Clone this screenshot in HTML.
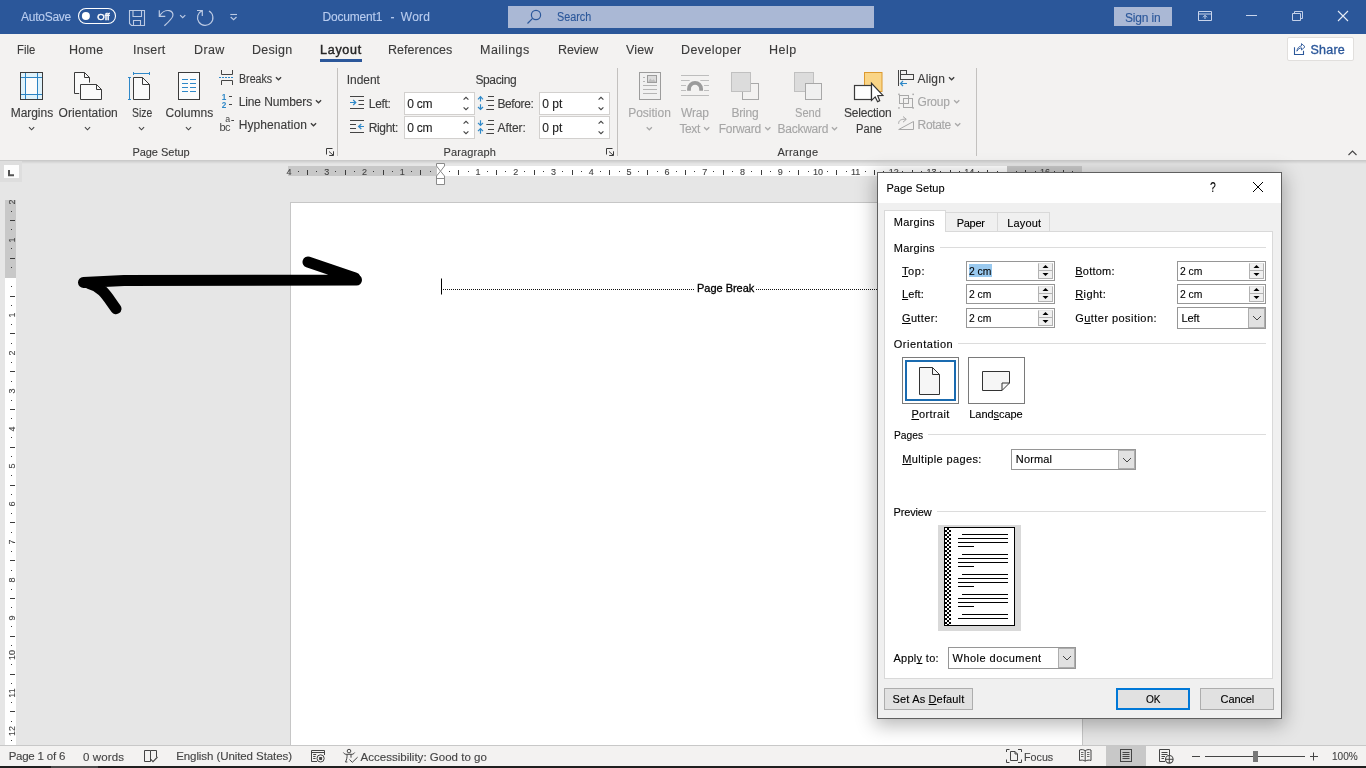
<!DOCTYPE html>
<html><head><meta charset="utf-8"><title>Document1 - Word</title>
<style>
*{box-sizing:border-box;margin:0;padding:0}
html,body{width:1366px;height:768px;overflow:hidden;background:#e6e6e6;font-family:"Liberation Sans",sans-serif;font-size:12px;color:#444}
.a{position:absolute;white-space:nowrap;-webkit-text-stroke:0.12px}
svg{position:absolute;left:0;top:0;overflow:visible}
u{text-decoration:underline;text-underline-offset:1px;text-decoration-thickness:1px;text-decoration-skip-ink:none}
</style></head><body>
<div id="root" style="position:absolute;left:0;top:0;width:1366px;height:768px;will-change:transform">
<div class="a" style="left:0px;top:0px;width:1366px;height:34px;background:#2b579a;"></div>
<div class="a" style="left:0px;top:34px;width:1366px;height:126px;background:#f3f2f1;"></div>
<div class="a" style="left:0px;top:160px;width:1366px;height:4px;background:linear-gradient(#c6c6c6,#e6e6e6);"></div>
<div class="a" style="left:508px;top:6px;width:366px;height:22px;background:#aab8d5;"></div>
<div class="a" style="left:1114px;top:7px;width:58px;height:19px;background:#aab8d5;"></div>
<div class="a" style="left:1287px;top:37px;width:67px;height:24px;background:#fff;border:1px solid #e1dfdd;border-radius:2px;"></div>
<div class="a" style="left:320px;top:59px;width:42px;height:3px;background:#2b579a;"></div>
<div class="a" style="left:404px;top:92px;width:71px;height:23px;background:#fff;border:1px solid #d2d0ce;"></div>
<div class="a" style="left:404px;top:116px;width:71px;height:23px;background:#fff;border:1px solid #d2d0ce;"></div>
<div class="a" style="left:539px;top:92px;width:71px;height:23px;background:#fff;border:1px solid #d2d0ce;"></div>
<div class="a" style="left:539px;top:116px;width:71px;height:23px;background:#fff;border:1px solid #d2d0ce;"></div>
<div class="a" style="left:288px;top:166px;width:149px;height:10px;background:#c8c8c8;"></div>
<div class="a" style="left:437px;top:166px;width:570px;height:10px;background:#fff;"></div>
<div class="a" style="left:1007px;top:166px;width:75px;height:10px;background:#c8c8c8;"></div>
<div class="a" style="left:5px;top:200px;width:11px;height:78px;background:#c8c8c8;"></div>
<div class="a" style="left:5px;top:278px;width:11px;height:467px;background:#fff;"></div>
<div class="a" style="left:0px;top:161px;width:22px;height:21px;background:#dedede;"></div>
<div class="a" style="left:4px;top:165px;width:15px;height:13px;background:#fdfdfd;"></div>
<div class="a" style="left:290px;top:202px;width:793px;height:544px;background:#fff;border:1px solid #c6c6c6;"></div>
<div class="a" style="left:0px;top:745px;width:1366px;height:21px;background:#f3f2f1;border-top:1px solid #c8c8c8;"></div>
<div class="a" style="left:1106px;top:746px;width:40px;height:20px;background:#c8c8c8;"></div>
<div class="a" style="left:0px;top:766px;width:1366px;height:2px;background:#1f1f1f;"></div>
<div class="a" style="left:51px;top:766px;width:47px;height:2px;background:#4c4c4c;"></div>
<div class="a" style="left:21.0px;top:10.0px;font-size:12px;line-height:14px;color:#b9cdf0;letter-spacing:-0.26px;">AutoSave</div>
<div class="a" style="left:97.3px;top:11.0px;font-size:9.5px;line-height:11px;color:#fff;letter-spacing:-0.05px;-webkit-text-stroke:0.45px #fff;">Off</div>
<div class="a" style="left:322.5px;top:10.0px;font-size:12px;line-height:14px;color:#b9cdf0;letter-spacing:-0.18px;">Document1</div>
<div class="a" style="left:390.6px;top:10.0px;font-size:12px;line-height:14px;color:#b9cdf0;">-</div>
<div class="a" style="left:400.8px;top:10.0px;font-size:12px;line-height:14px;color:#b9cdf0;letter-spacing:0.26px;">Word</div>
<div class="a" style="left:557.0px;top:10.0px;font-size:12px;line-height:14px;color:#2b579a;transform:scaleX(0.900);transform-origin:0 0;">Search</div>
<div class="a" style="left:1125.0px;top:11.0px;font-size:12px;line-height:14px;color:#2b579a;letter-spacing:-0.19px;word-spacing:0.19px;">Sign in</div>
<div class="a" style="left:17.0px;top:43.0px;font-size:12.5px;line-height:14px;color:#3b3b3b;transform:scaleX(0.905);transform-origin:0 0;">File</div>
<div class="a" style="left:69.0px;top:43.0px;font-size:12.5px;line-height:14px;color:#3b3b3b;letter-spacing:0.30px;">Home</div>
<div class="a" style="left:133.0px;top:43.0px;font-size:12.5px;line-height:14px;color:#3b3b3b;letter-spacing:0.20px;">Insert</div>
<div class="a" style="left:194.0px;top:43.0px;font-size:12.5px;line-height:14px;color:#3b3b3b;letter-spacing:0.36px;">Draw</div>
<div class="a" style="left:252.0px;top:43.0px;font-size:12.5px;line-height:14px;color:#3b3b3b;letter-spacing:0.27px;">Design</div>
<div class="a" style="left:388.0px;top:43.0px;font-size:12.5px;line-height:14px;color:#3b3b3b;letter-spacing:0.04px;">References</div>
<div class="a" style="left:480.0px;top:43.0px;font-size:12.5px;line-height:14px;color:#3b3b3b;letter-spacing:0.49px;">Mailings</div>
<div class="a" style="left:558.0px;top:43.0px;font-size:12.5px;line-height:14px;color:#3b3b3b;letter-spacing:-0.15px;">Review</div>
<div class="a" style="left:626.0px;top:43.0px;font-size:12.5px;line-height:14px;color:#3b3b3b;letter-spacing:0.13px;">View</div>
<div class="a" style="left:681.0px;top:43.0px;font-size:12.5px;line-height:14px;color:#3b3b3b;letter-spacing:0.41px;">Developer</div>
<div class="a" style="left:769.0px;top:43.0px;font-size:12.5px;line-height:14px;color:#3b3b3b;letter-spacing:0.51px;">Help</div>
<div class="a" style="left:320.0px;top:43.0px;font-size:12.5px;line-height:14px;color:#262626;letter-spacing:0.74px;-webkit-text-stroke:0.45px #262626;">Layout</div>
<div class="a" style="left:1310.5px;top:43.0px;font-size:12.5px;line-height:14px;color:#2b579a;letter-spacing:0.22px;-webkit-text-stroke:0.35px #2b579a;">Share</div>
<div class="a" style="left:10.7px;top:105.7px;font-size:12px;line-height:14px;color:#3b3b3b;letter-spacing:-0.04px;">Margins</div>
<div class="a" style="left:58.6px;top:105.7px;font-size:12px;line-height:14px;color:#3b3b3b;letter-spacing:0.05px;">Orientation</div>
<div class="a" style="left:132.0px;top:105.7px;font-size:12px;line-height:14px;color:#3b3b3b;transform:scaleX(0.866);transform-origin:0 0;">Size</div>
<div class="a" style="left:165.6px;top:105.7px;font-size:12px;line-height:14px;color:#3b3b3b;letter-spacing:0.05px;">Columns</div>
<div class="a" style="left:132.4px;top:146.0px;font-size:11px;line-height:12px;color:#3b3b3b;letter-spacing:-0.03px;word-spacing:0.03px;">Page Setup</div>
<div class="a" style="left:238.7px;top:71.7px;font-size:12px;line-height:14px;color:#3b3b3b;transform:scaleX(0.889);transform-origin:0 0;">Breaks</div>
<div class="a" style="left:238.7px;top:94.7px;font-size:12px;line-height:14px;color:#3b3b3b;letter-spacing:-0.12px;word-spacing:0.12px;">Line Numbers</div>
<div class="a" style="left:238.7px;top:117.7px;font-size:12px;line-height:14px;color:#3b3b3b;letter-spacing:0.09px;">Hyphenation</div>
<div class="a" style="left:346.7px;top:73.0px;font-size:12px;line-height:14px;color:#3b3b3b;letter-spacing:-0.02px;">Indent</div>
<div class="a" style="left:368.8px;top:96.7px;font-size:12px;line-height:14px;color:#3b3b3b;letter-spacing:-0.33px;">Left:</div>
<div class="a" style="left:368.8px;top:120.5px;font-size:12px;line-height:14px;color:#3b3b3b;letter-spacing:-0.38px;">Right:</div>
<div class="a" style="left:475.4px;top:73.0px;font-size:12px;line-height:14px;color:#3b3b3b;letter-spacing:-0.35px;">Spacing</div>
<div class="a" style="left:497.5px;top:96.7px;font-size:12px;line-height:14px;color:#3b3b3b;letter-spacing:-0.41px;">Before:</div>
<div class="a" style="left:497.5px;top:120.5px;font-size:12px;line-height:14px;color:#3b3b3b;letter-spacing:-0.09px;">After:</div>
<div class="a" style="left:407.2px;top:96.7px;font-size:12px;line-height:14px;color:#1f1f1f;letter-spacing:-0.38px;word-spacing:0.38px;">0 cm</div>
<div class="a" style="left:407.2px;top:120.5px;font-size:12px;line-height:14px;color:#1f1f1f;letter-spacing:-0.38px;word-spacing:0.38px;">0 cm</div>
<div class="a" style="left:542.2px;top:96.7px;font-size:12px;line-height:14px;color:#1f1f1f;letter-spacing:0.07px;">0 pt</div>
<div class="a" style="left:542.2px;top:120.5px;font-size:12px;line-height:14px;color:#1f1f1f;letter-spacing:0.07px;">0 pt</div>
<div class="a" style="left:443.5px;top:146.0px;font-size:11px;line-height:12px;color:#3b3b3b;letter-spacing:0.11px;">Paragraph</div>
<div class="a" style="left:628.2px;top:105.7px;font-size:12px;line-height:14px;color:#a6a6a6;letter-spacing:-0.01px;">Position</div>
<div class="a" style="left:681.0px;top:105.7px;font-size:12px;line-height:14px;color:#a6a6a6;letter-spacing:-0.14px;">Wrap</div>
<div class="a" style="left:679.5px;top:121.7px;font-size:12px;line-height:14px;color:#a6a6a6;letter-spacing:-0.42px;">Text</div>
<div class="a" style="left:731.4px;top:105.7px;font-size:12px;line-height:14px;color:#a6a6a6;letter-spacing:-0.19px;">Bring</div>
<div class="a" style="left:718.7px;top:121.7px;font-size:12px;line-height:14px;color:#a6a6a6;letter-spacing:-0.25px;">Forward</div>
<div class="a" style="left:795.3px;top:105.7px;font-size:12px;line-height:14px;color:#a6a6a6;transform:scaleX(0.925);transform-origin:0 0;">Send</div>
<div class="a" style="left:777.5px;top:121.7px;font-size:12px;line-height:14px;color:#a6a6a6;letter-spacing:-0.25px;">Backward</div>
<div class="a" style="left:844.0px;top:105.7px;font-size:12px;line-height:14px;color:#3b3b3b;letter-spacing:-0.22px;">Selection</div>
<div class="a" style="left:855.5px;top:121.7px;font-size:12px;line-height:14px;color:#3b3b3b;transform:scaleX(0.929);transform-origin:0 0;">Pane</div>
<div class="a" style="left:777.5px;top:146.0px;font-size:11px;line-height:12px;color:#3b3b3b;letter-spacing:0.23px;">Arrange</div>
<div class="a" style="left:917.6px;top:71.7px;font-size:12px;line-height:14px;color:#3b3b3b;letter-spacing:0.14px;">Align</div>
<div class="a" style="left:917.6px;top:94.7px;font-size:12px;line-height:14px;color:#a6a6a6;letter-spacing:-0.28px;">Group</div>
<div class="a" style="left:917.6px;top:117.7px;font-size:12px;line-height:14px;color:#a6a6a6;letter-spacing:-0.34px;">Rotate</div>
<div class="a" style="left:697.0px;top:282.0px;font-size:11px;line-height:12px;color:#000;letter-spacing:-0.03px;word-spacing:0.03px;-webkit-text-stroke:0.3px #000;">Page Break</div>
<div class="a" style="left:8.7px;top:750.0px;font-size:11.5px;line-height:12px;color:#444;letter-spacing:-0.30px;word-spacing:0.30px;">Page 1 of 6</div>
<div class="a" style="left:83.0px;top:751.0px;font-size:11.5px;line-height:12px;color:#444;letter-spacing:0.11px;">0 words</div>
<div class="a" style="left:176.2px;top:750.0px;font-size:11.5px;line-height:12px;color:#444;letter-spacing:-0.09px;word-spacing:0.09px;">English (United States)</div>
<div class="a" style="left:360.5px;top:750.6px;font-size:11.5px;line-height:12px;color:#444;letter-spacing:0.02px;">Accessibility: Good to go</div>
<div class="a" style="left:1024.4px;top:751.0px;font-size:11.5px;line-height:12px;color:#444;transform:scaleX(0.933);transform-origin:0 0;">Focus</div>
<div class="a" style="left:1332.0px;top:750.0px;font-size:11.5px;line-height:12px;color:#444;transform:scaleX(0.877);transform-origin:0 0;">100%</div>
<div class="a" style="left:399.8px;top:166.6px;font-size:9px;line-height:10px;color:#444;">1</div>
<div class="a" style="left:362.0px;top:166.6px;font-size:9px;line-height:10px;color:#444;">2</div>
<div class="a" style="left:324.2px;top:166.6px;font-size:9px;line-height:10px;color:#444;">3</div>
<div class="a" style="left:286.4px;top:166.6px;font-size:9px;line-height:10px;color:#444;">4</div>
<div class="a" style="left:475.4px;top:166.6px;font-size:9px;line-height:10px;color:#444;">1</div>
<div class="a" style="left:513.2px;top:166.6px;font-size:9px;line-height:10px;color:#444;">2</div>
<div class="a" style="left:551.0px;top:166.6px;font-size:9px;line-height:10px;color:#444;">3</div>
<div class="a" style="left:588.8px;top:166.6px;font-size:9px;line-height:10px;color:#444;">4</div>
<div class="a" style="left:626.6px;top:166.6px;font-size:9px;line-height:10px;color:#444;">5</div>
<div class="a" style="left:664.4px;top:166.6px;font-size:9px;line-height:10px;color:#444;">6</div>
<div class="a" style="left:702.2px;top:166.6px;font-size:9px;line-height:10px;color:#444;">7</div>
<div class="a" style="left:740.0px;top:166.6px;font-size:9px;line-height:10px;color:#444;">8</div>
<div class="a" style="left:777.8px;top:166.6px;font-size:9px;line-height:10px;color:#444;">9</div>
<div class="a" style="left:813.1px;top:166.6px;font-size:9px;line-height:10px;color:#444;">10</div>
<div class="a" style="left:850.9px;top:166.6px;font-size:9px;line-height:10px;color:#444;">11</div>
<div class="a" style="left:888.7px;top:166.6px;font-size:9px;line-height:10px;color:#444;">12</div>
<div class="a" style="left:926.5px;top:166.6px;font-size:9px;line-height:10px;color:#444;">13</div>
<div class="a" style="left:964.3px;top:166.6px;font-size:9px;line-height:10px;color:#444;">14</div>
<div class="a" style="left:1039.9px;top:166.6px;font-size:9px;line-height:10px;color:#444;">16</div>
<div class="a" style="left:6.3px;top:233.6px;width:11px;height:12px;font-size:9px;line-height:12px;color:#444;text-align:center;transform:rotate(-90deg)">1</div>
<div class="a" style="left:6.3px;top:195.8px;width:11px;height:12px;font-size:9px;line-height:12px;color:#444;text-align:center;transform:rotate(-90deg)">2</div>
<div class="a" style="left:6.3px;top:309.2px;width:11px;height:12px;font-size:9px;line-height:12px;color:#444;text-align:center;transform:rotate(-90deg)">1</div>
<div class="a" style="left:6.3px;top:347.0px;width:11px;height:12px;font-size:9px;line-height:12px;color:#444;text-align:center;transform:rotate(-90deg)">2</div>
<div class="a" style="left:6.3px;top:384.8px;width:11px;height:12px;font-size:9px;line-height:12px;color:#444;text-align:center;transform:rotate(-90deg)">3</div>
<div class="a" style="left:6.3px;top:422.6px;width:11px;height:12px;font-size:9px;line-height:12px;color:#444;text-align:center;transform:rotate(-90deg)">4</div>
<div class="a" style="left:6.3px;top:460.4px;width:11px;height:12px;font-size:9px;line-height:12px;color:#444;text-align:center;transform:rotate(-90deg)">5</div>
<div class="a" style="left:6.3px;top:498.2px;width:11px;height:12px;font-size:9px;line-height:12px;color:#444;text-align:center;transform:rotate(-90deg)">6</div>
<div class="a" style="left:6.3px;top:536.0px;width:11px;height:12px;font-size:9px;line-height:12px;color:#444;text-align:center;transform:rotate(-90deg)">7</div>
<div class="a" style="left:6.3px;top:573.8px;width:11px;height:12px;font-size:9px;line-height:12px;color:#444;text-align:center;transform:rotate(-90deg)">8</div>
<div class="a" style="left:6.3px;top:611.6px;width:11px;height:12px;font-size:9px;line-height:12px;color:#444;text-align:center;transform:rotate(-90deg)">9</div>
<div class="a" style="left:6.3px;top:649.4px;width:11px;height:12px;font-size:9px;line-height:12px;color:#444;text-align:center;transform:rotate(-90deg)">10</div>
<div class="a" style="left:6.3px;top:687.2px;width:11px;height:12px;font-size:9px;line-height:12px;color:#444;text-align:center;transform:rotate(-90deg)">11</div>
<div class="a" style="left:6.3px;top:725.0px;width:11px;height:12px;font-size:9px;line-height:12px;color:#444;text-align:center;transform:rotate(-90deg)">12</div>
<svg width="1366" height="768" viewBox="0 0 1366 768"><rect x="78.5" y="8.5" width="37" height="15" rx="7.5" stroke="#fff" fill="none" stroke-width="1.1"/>
<circle cx="85.9" cy="16.1" r="4" fill="#fff"/>
<path d="M129.5,10.5 H144.5 V25.5 H131.5 L129.5,23.5 Z M133,10.5 V16.5 H141.5 V10.5 M133.5,25.5 V20.5 H140.5 V25.5" stroke="#bccae3" fill="none" stroke-width="1.1" />
<path d="M159.3,10.2 V16.4 H165.3 M159.5,16.2 C161.5,12.5 165.5,10 169.3,10.6 C172,11.3 173.3,13.5 172.8,16 C172.3,18.5 169,21.5 164.4,25.8" stroke="#bccae3" fill="none" stroke-width="1.2" />
<path d="M180.1,15.099999999999998 L182.7,17.7 L185.29999999999998,15.099999999999998" stroke="#bccae3" fill="none" stroke-width="1.2" />
<path d="M197,10.5 H202.3 V15.9 M209,11 A7.7,7.7 0 1 1 202.2,10.6" stroke="#bccae3" fill="none" stroke-width="1.2" />
<path d="M230.3,14.5 H237" stroke="#bccae3" fill="none" stroke-width="1.1" />
<path d="M230.7,17.0 L233.6,19.6 L236.5,17.0" stroke="#bccae3" fill="none" stroke-width="1.2" />
<circle cx="536" cy="15" r="4.6" stroke="#2b579a" fill="none" stroke-width="1.2"/>
<path d="M532.6,18.4 L527.5,23.5" stroke="#2b579a" fill="none" stroke-width="1.2" />
<path d="M1198.5,11.5 H1211.5 V20.5 H1198.5 Z M1198.5,14 H1211.5" stroke="#c9d5ec" fill="none" stroke-width="1" />
<path d="M1205,19 V15.5 M1203,17.3 L1205,15.3 L1207,17.3" stroke="#c9d5ec" fill="none" stroke-width="1" />
<path d="M1246,15.5 H1257" stroke="#c9d5ec" fill="none" stroke-width="1" />
<path d="M1292.5,13.5 H1300.5 V20.5 H1292.5 Z M1294.5,13.5 V11.5 H1302.5 V18.5 H1300.5" stroke="#c3d0e9" fill="none" stroke-width="1" />
<path d="M1338,11 L1348,21 M1348,11 L1338,21" stroke="#e6ecf6" fill="none" stroke-width="1.1" />
<path d="M1294.5,47.2 V54.5 H1303.5 V50.8" stroke="#2b579a" fill="none" stroke-width="1.1" />
<path d="M1296.9,51.2 C1297.2,48.2 1299,46.3 1301.5,45.9 V43.6 L1305,46.8 L1301.5,50 V47.8 C1299.6,48 1298,49.2 1296.9,51.2 Z" stroke="#2b579a" fill="none" stroke-width="0.9" stroke-linejoin="round"/>
<rect x="20.5" y="72.5" width="22" height="27" stroke="#3b3b3b" fill="#dff2fb" stroke-width="1" />
<rect x="25.5" y="77.5" width="12" height="17" stroke="none" fill="#fbfbfb" stroke-width="0" />
<path d="M25.5,73 V99 M37.5,73 V99 M21,77.5 H42 M21,94.5 H42" stroke="#2c84c4" fill="none" stroke-width="1" />
<path d="M74.5,72.5 H84.5 L89.5,77.5 V84 H80.5 V93.5 H74.5 Z" stroke="none" fill="#fafafa" stroke-width="0" />
<path d="M89.5,82.6 V77.5 L84.5,72.5 H74.5 V93.5 H79.2" stroke="#3b3b3b" fill="none" stroke-width="1" />
<path d="M84.5,72.5 V77.5 H89.5" stroke="#3b3b3b" fill="none" stroke-width="1" />
<path d="M80.5,84.5 H96.5 L101.5,89.5 V99.5 H80.5 Z" stroke="#3b3b3b" fill="#fafafa" stroke-width="1" />
<path d="M96.5,84.5 V89.5 H101.5" stroke="#3b3b3b" fill="none" stroke-width="1" />
<path d="M133.5,77.5 H142.5 L149.5,84.5 V99.5 H133.5 Z" stroke="#3b3b3b" fill="#fafafa" stroke-width="1" />
<path d="M142.5,77.5 V84.5 H149.5" stroke="#3b3b3b" fill="none" stroke-width="1" />
<path d="M133,73.5 H150 M133.5,72 V75 M149.5,72 V75" stroke="#2e88c8" fill="none" stroke-width="1" />
<path d="M129.5,77 V100 M128,77.5 H131 M128,99.5 H131" stroke="#2e88c8" fill="none" stroke-width="1" />
<rect x="178.5" y="72.5" width="21" height="27" stroke="#3b3b3b" fill="#fbfbfb" stroke-width="1" />
<path d="M182,79.5 H188 M190,79.5 H196" stroke="#2e88c8" fill="none" stroke-width="1" />
<path d="M182,83.5 H188 M190,83.5 H196" stroke="#2e88c8" fill="none" stroke-width="1" />
<path d="M182,87.5 H188 M190,87.5 H196" stroke="#2e88c8" fill="none" stroke-width="1" />
<path d="M182,91.5 H188 M190,91.5 H196" stroke="#2e88c8" fill="none" stroke-width="1" />
<path d="M29.0,127.2 L31.6,129.8 L34.2,127.2" stroke="#444" fill="none" stroke-width="1.1" />
<path d="M84.9,127.2 L87.5,129.8 L90.1,127.2" stroke="#444" fill="none" stroke-width="1.1" />
<path d="M138.9,127.2 L141.5,129.8 L144.1,127.2" stroke="#444" fill="none" stroke-width="1.1" />
<path d="M185.9,127.2 L188.5,129.8 L191.1,127.2" stroke="#444" fill="none" stroke-width="1.1" />
<path d="M221.5,70 V74.5 H232.5 V70 M221.5,85 V80.5 H232.5 V85" stroke="#444" fill="none" stroke-width="1" />
<path d="M219,77.5 H234" stroke="#2e88c8" fill="none" stroke-width="1" stroke-dasharray="2 1"/>
<path d="M275.9,77.2 L278.5,79.8 L281.1,77.2" stroke="#3b3b3b" fill="none" stroke-width="1.25" />
<text x="221.8" y="99.6" font-size="8.2" font-weight="bold" fill="#2e88c8" font-family="Liberation Sans, sans-serif">1</text>
<text x="221.8" y="108.1" font-size="8.2" font-weight="bold" fill="#2e88c8" font-family="Liberation Sans, sans-serif">2</text>
<path d="M229,96.5 H232 M229,104.5 H232" stroke="#444" fill="none" stroke-width="1.1" />
<path d="M315.9,100.2 L318.5,102.8 L321.1,100.2" stroke="#3b3b3b" fill="none" stroke-width="1.25" />
<text x="225.3" y="122" font-size="8.8" fill="#444" font-family="Liberation Sans, sans-serif">a</text>
<text x="219.5" y="130.7" font-size="11" letter-spacing="-0.5" fill="#444" font-family="Liberation Sans, sans-serif">bc</text>
<path d="M231.3,120.5 H234" stroke="#444" fill="none" stroke-width="1" />
<path d="M310.9,123.2 L313.5,125.8 L316.1,123.2" stroke="#3b3b3b" fill="none" stroke-width="1.25" />
<path d="M326.5,154.5 V148.5 H332.5" stroke="#3b3b3b" fill="none" stroke-width="1" />
<path d="M329,151.5 L333.2,155.2 M333.5,151.3 V155.5 H329.2" stroke="#3b3b3b" fill="none" stroke-width="1" />
<path d="M606.5,154.5 V148.5 H612.5" stroke="#3b3b3b" fill="none" stroke-width="1" />
<path d="M609,151.5 L613.2,155.2 M613.5,151.3 V155.5 H609.2" stroke="#3b3b3b" fill="none" stroke-width="1" />
<path d="M337.5,68 V156" stroke="#c3c1bf" fill="none" stroke-width="1" />
<path d="M617.5,68 V156" stroke="#c3c1bf" fill="none" stroke-width="1" />
<path d="M976.5,68 V156" stroke="#c3c1bf" fill="none" stroke-width="1" />
<path d="M350,96.5 H364 M358.5,100.5 H364 M358.5,104.5 H364 M350,108.5 H364" stroke="#444" fill="none" stroke-width="1" />
<path d="M350,102.5 H355.7 M353.2,100 L355.8,102.5 L353.2,105" stroke="#2e88c8" fill="none" stroke-width="1.2" />
<path d="M350,120.5 H364 M350,124.5 H356 M350,128.5 H356 M350,132.5 H364" stroke="#444" fill="none" stroke-width="1" />
<path d="M358.7,126.5 H364 M361.3,124 L358.6,126.5 L361.3,129" stroke="#2e88c8" fill="none" stroke-width="1.2" />
<path d="M488,96.5 H494 M486.3,100.5 H494 M488,105.5 H494 M486.3,109.5 H494" stroke="#444" fill="none" stroke-width="1" />
<path d="M480.5,96.8 V101.6 M478,99.3 L480.5,96.7 L483,99.3 M480.5,104.3 V109.4 M478,107 L480.5,109.5 L483,107" stroke="#2e88c8" fill="none" stroke-width="1.2" />
<path d="M488,120.5 H494 M486.3,124.5 H494 M488,129.5 H494 M486.3,133.5 H494" stroke="#444" fill="none" stroke-width="1" />
<path d="M480.5,120.3 V125.3 M478,122.9 L480.5,125.4 L483,122.9 M480.5,128.7 V133.8 M478,131.2 L480.5,128.6 L483,131.2" stroke="#2e88c8" fill="none" stroke-width="1.2" />
<path d="M463.6,99.7 L466,97.3 L468.4,99.7" stroke="#444" fill="none" stroke-width="1.1" />
<path d="M463.6,107.3 L466,109.7 L468.4,107.3" stroke="#444" fill="none" stroke-width="1.1" />
<path d="M463.6,123.7 L466,121.3 L468.4,123.7" stroke="#444" fill="none" stroke-width="1.1" />
<path d="M463.6,131.3 L466,133.7 L468.4,131.3" stroke="#444" fill="none" stroke-width="1.1" />
<path d="M598.6,99.7 L601,97.3 L603.4,99.7" stroke="#444" fill="none" stroke-width="1.1" />
<path d="M598.6,107.3 L601,109.7 L603.4,107.3" stroke="#444" fill="none" stroke-width="1.1" />
<path d="M598.6,123.7 L601,121.3 L603.4,123.7" stroke="#444" fill="none" stroke-width="1.1" />
<path d="M598.6,131.3 L601,133.7 L603.4,131.3" stroke="#444" fill="none" stroke-width="1.1" />
<rect x="639.5" y="72.5" width="21" height="27" stroke="#9c9c9c" fill="#f0f0f0" stroke-width="1" />
<rect x="647.5" y="75.5" width="9" height="7" stroke="#9c9c9c" fill="#dcdcdc" stroke-width="1" />
<path d="M648,82 L650.3,78.5 L652,80.5 L653.6,79.3 L656,82 Z" stroke="none" fill="#bdbdbd" stroke-width="0" />
<path d="M643,77.5 H645 M643,81.5 H645 M643,85.5 H657 M643,89.5 H657 M643,93.5 H657" stroke="#b4b4b4" fill="none" stroke-width="1" />
<path d="M646.6999999999999,127.2 L649.3,129.8 L651.9,127.2" stroke="#a8a8a8" fill="none" stroke-width="1.25" />
<path d="M681,75.5 H709 M681,80.5 H689.7 M700.3,80.5 H709 M681,85.5 H686 M704,85.5 H709 M681,90.5 H686 M704,90.5 H709 M681,95.5 H709" stroke="#bdbdbd" fill="none" stroke-width="1" />
<path d="M689,90.8 V88.9 A6.05,6.05 0 0 1 701.1,88.9 V90.8" stroke="#9b9b9b" fill="none" stroke-width="3.8" />
<path d="M704.1,127.2 L706.7,129.8 L709.3000000000001,127.2" stroke="#a8a8a8" fill="none" stroke-width="1.25" />
<rect x="742.5" y="83.5" width="16" height="16" stroke="#a8a8a8" fill="#f3f2f1" stroke-width="1" />
<rect x="731.5" y="72.5" width="19" height="19" stroke="#c0c0c0" fill="#dcdcdc" stroke-width="1" />
<path d="M765.1999999999999,127.2 L767.8,129.8 L770.4,127.2" stroke="#a8a8a8" fill="none" stroke-width="1.25" />
<rect x="794.5" y="72.5" width="19" height="19" stroke="#c0c0c0" fill="#dcdcdc" stroke-width="1" />
<rect x="805.5" y="83.5" width="16" height="16" stroke="#a8a8a8" fill="#f0f0f0" stroke-width="1" />
<path d="M831.9,127.2 L834.5,129.8 L837.1,127.2" stroke="#a8a8a8" fill="none" stroke-width="1.25" />
<rect x="864.5" y="72.5" width="17.5" height="19" stroke="#dc9a30" fill="#fad586" stroke-width="1" />
<rect x="854.5" y="85.5" width="17" height="14" stroke="#3b3b3b" fill="#fdfdfd" stroke-width="1.2" />
<path d="M871.5,83.3 L871.5,100.4 L875.2,96.9 L877.6,101.7 L879.7,100.6 L877.7,95.7 L882.9,95.4 Z" stroke="#333" fill="#fff" stroke-width="1.2" stroke-linejoin="miter"/>
<path d="M898.5,70 V86" stroke="#444" fill="none" stroke-width="1" />
<rect x="900.5" y="70.5" width="6" height="4" stroke="#444" fill="none" stroke-width="1" />
<rect x="900.5" y="74.5" width="13" height="5" stroke="#444" fill="none" stroke-width="1" />
<path d="M900.6,83.5 H907 M903,81 L900.5,83.5 L903,86" stroke="#2e88c8" fill="none" stroke-width="1.2" />
<path d="M949.0,77.2 L951.6,79.8 L954.2,77.2" stroke="#3b3b3b" fill="none" stroke-width="1.25" />
<rect x="899.5" y="95.5" width="9" height="8" stroke="#a8a8a8" fill="none" stroke-width="1" />
<rect x="903.5" y="98.5" width="9" height="9" stroke="#a8a8a8" fill="none" stroke-width="1" />
<rect x="898.2" y="93.6" width="1.5" height="1.5" stroke="none" fill="#a8a8a8" stroke-width="0" />
<rect x="912.4" y="93.6" width="1.5" height="1.5" stroke="none" fill="#a8a8a8" stroke-width="0" />
<rect x="898.2" y="107.2" width="1.5" height="1.5" stroke="none" fill="#a8a8a8" stroke-width="0" />
<rect x="912.4" y="107.2" width="1.5" height="1.5" stroke="none" fill="#a8a8a8" stroke-width="0" />
<path d="M954.1,100.2 L956.7,102.8 L959.3000000000001,100.2" stroke="#a8a8a8" fill="none" stroke-width="1.25" />
<path d="M898.7,129.5 H913.5 V121.5 Z" stroke="#a8a8a8" fill="none" stroke-width="1" />
<path d="M898.7,123.8 C898.3,120.5 901,119 906,119.2 M903,116.5 L906.3,119.3 L903,122.2" stroke="#a8a8a8" fill="none" stroke-width="1" />
<path d="M955.1,123.2 L957.7,125.8 L960.3000000000001,123.2" stroke="#a8a8a8" fill="none" stroke-width="1.25" />
<path d="M1348.5,155.0 L1352.5,151.0 L1356.5,155.0" stroke="#444" fill="none" stroke-width="1.1" />
<path d="M298.5,171 V172 M307.5,170 V175 M316.5,171 V172 M335.5,171 V172 M345.5,170 V175 M354.5,171 V172 M373.5,171 V172 M383.5,170 V175 M392.5,171 V172 M411.5,171 V172 M420.5,170 V175 M430.5,171 V172 M449.5,171 V172 M458.5,170 V175 M468.5,171 V172 M487.5,171 V172 M496.5,170 V175 M505.5,171 V172 M524.5,171 V172 M534.5,170 V175 M543.5,171 V172 M562.5,171 V172 M572.5,170 V175 M581.5,171 V172 M600.5,171 V172 M609.5,170 V175 M619.5,171 V172 M638.5,171 V172 M647.5,170 V175 M657.5,171 V172 M676.5,171 V172 M685.5,170 V175 M694.5,171 V172 M713.5,171 V172 M723.5,170 V175 M732.5,171 V172 M751.5,171 V172 M761.5,170 V175 M770.5,171 V172 M789.5,171 V172 M798.5,170 V175 M808.5,171 V172 M827.5,171 V172 M836.5,170 V175 M846.5,171 V172 M865.5,171 V172 M874.5,170 V175 M883.5,171 V172 M902.5,171 V172 M912.5,170 V175 M921.5,171 V172 M940.5,171 V172 M950.5,170 V175 M959.5,171 V172 M978.5,171 V172 M987.5,170 V175 M997.5,171 V172 M1016.5,171 V172 M1025.5,170 V175 M1035.5,171 V172 M1054.5,171 V172 M1063.5,170 V175 M1072.5,171 V172" stroke="#3c3c3c" fill="none" stroke-width="1" shape-rendering="crispEdges"/>
<path d="M11,211.5 H12 M10,220.5 H15 M11,229.5 H12 M11,248.5 H12 M10,258.5 H15 M11,267.5 H12 M11,286.5 H12 M10,296.5 H15 M11,305.5 H12 M11,324.5 H12 M10,333.5 H15 M11,343.5 H12 M11,362.5 H12 M10,371.5 H15 M11,381.5 H12 M11,400.5 H12 M10,409.5 H15 M11,418.5 H12 M11,437.5 H12 M10,447.5 H15 M11,456.5 H12 M11,475.5 H12 M10,485.5 H15 M11,494.5 H12 M11,513.5 H12 M10,522.5 H15 M11,532.5 H12 M11,551.5 H12 M10,560.5 H15 M11,570.5 H12 M11,589.5 H12 M10,598.5 H15 M11,607.5 H12 M11,626.5 H12 M10,636.5 H15 M11,645.5 H12 M11,664.5 H12 M10,674.5 H15 M11,683.5 H12 M11,702.5 H12 M10,711.5 H15 M11,721.5 H12 M11,740.5 H12" stroke="#3c3c3c" fill="none" stroke-width="1" shape-rendering="crispEdges"/>
<path d="M9,170 V175.2 H14" stroke="#555" fill="none" stroke-width="2" />
<path d="M436.5,163.5 H444.5 V166 L440.5,171.2 L436.5,166 Z" stroke="#8a8a8a" fill="#fff" stroke-width="1" />
<path d="M440.5,171.2 L444.5,176 V184.5 H436.5 V176 Z M436.5,178.5 H444.5" stroke="#8a8a8a" fill="#fff" stroke-width="1" />
<path d="M441.5,278.5 V294.5" stroke="#000" fill="none" stroke-width="1" />
<path d="M443,289.5 H695" stroke="#111" fill="none" stroke-width="1" stroke-dasharray="1 1" shape-rendering="crispEdges"/>
<path d="M756,289.5 H880" stroke="#111" fill="none" stroke-width="1" stroke-dasharray="1 1" shape-rendering="crispEdges"/>
<path d="M308,262 L355,278 M356.5,280 L124,280.5 L83.5,282.5 M90,284 C103,287 108,298 116,308.7" stroke="#000" fill="none" stroke-width="11" stroke-linecap="round" stroke-linejoin="round"/>
<path d="M144.5,750.5 H150.5 V761.5 H144.5 Z M150.5,750.5 H156.5 V757" stroke="#444" fill="none" stroke-width="1" />
<path d="M150.8,759.3 L153,761.6 L157.5,757" stroke="#444" fill="none" stroke-width="1.1" />
<path d="M317,761.5 H311.5 V750.5 H324.5 V755 M311.5,752.5 H324.5 M313.2,754.5 H316.2 M313.2,756.5 H315.6 M313.2,758.5 H315.6" stroke="#444" fill="none" stroke-width="1" />
<circle cx="320.6" cy="758.4" r="3.6" stroke="#444" fill="#f3f2f1" stroke-width="1"/>
<rect x="319.1" y="756.9" width="3" height="3" rx=".6" fill="#444"/>
<circle cx="349" cy="751.1" r="1.8" stroke="#444" fill="none" stroke-width="1"/>
<path d="M343.4,752.5 C344.4,754.3 345.8,754.4 347,754.3 H351 C352.2,754.4 353.7,754.3 354.7,752.5 M347,754.3 C347.3,757 346.7,759.6 345.5,762 H347.4 M351,754.3 V757.7" stroke="#444" fill="none" stroke-width="1" />
<path d="M349.5,759.6 L352.3,762.3 L357.6,757.2" stroke="#444" fill="none" stroke-width="1" />
<path d="M1006.5,752 V749.5 H1009.5 M1018,749.5 H1021.5 V752 M1006.5,759.5 V762.5 H1009.5 M1018,762.5 H1021.5 V759.5" stroke="#444" fill="none" stroke-width="1" />
<path d="M1010.5,751.5 H1015 L1017.5,754 V760.5 H1010.5 Z M1015,751.5 V754 H1017.5" stroke="#444" fill="none" stroke-width="1" />
<path d="M1085.2,750.5 V761 M1079.5,750 C1081.5,749.3 1083.5,749.5 1085.2,750.7 C1087,749.5 1089,749.3 1091,750 V760.5 C1089,759.8 1087,760 1085.2,761.2 C1083.5,760 1081.5,759.8 1079.5,760.5 Z" stroke="#444" fill="none" stroke-width="1" />
<path d="M1081,752.5 H1083.5 M1081,754.5 H1083.5 M1081,756.5 H1083.5 M1087,752.5 H1089.5 M1087,754.5 H1089.5 M1087,756.5 H1089.5" stroke="#444" fill="none" stroke-width="0.8" />
<rect x="1120.5" y="749.5" width="11" height="12" stroke="#444" fill="none" stroke-width="1" />
<path d="M1122.5,752.5 H1129.5 M1122.5,754.5 H1129.5 M1122.5,756.5 H1129.5 M1122.5,758.5 H1129.5" stroke="#444" fill="none" stroke-width="1" />
<path d="M1169.5,755 V749.5 H1159.5 V761.5 H1165" stroke="#444" fill="none" stroke-width="1" />
<path d="M1161.5,752.5 H1167.5 M1161.5,754.5 H1167.5 M1161.5,756.5 H1165 M1161.5,758.5 H1164" stroke="#444" fill="none" stroke-width="1" />
<circle cx="1169.3" cy="759.3" r="3.8" stroke="#444" fill="#f3f2f1" stroke-width="1.1"/>
<path d="M1165.5,759.3 H1173 M1169.3,755.5 V763" stroke="#444" fill="none" stroke-width="1" />
<path d="M1192,756.5 H1200 M1205,756.5 H1305 M1310,756.5 H1318 M1313.5,752.5 V760.5" stroke="#444" fill="none" stroke-width="1" />
<rect x="1253.5" y="751.5" width="4" height="10" stroke="#777" fill="#777" stroke-width="1" /></svg>
<div class="a" style="left:877px;top:172px;width:405px;height:547px;background:#f0f0f0;border:1px solid #5f5f5f;box-shadow:0 4px 18px 2px rgba(0,0,0,.29);"></div>
<div class="a" style="left:878px;top:173px;width:403px;height:30px;background:#fff;"></div>
<div class="a" style="left:884px;top:231px;width:389px;height:448px;background:#fff;border:1px solid #d9d9d9;"></div>
<div class="a" style="left:945px;top:212px;width:53px;height:20px;background:#f0f0f0;border:1px solid #d9d9d9;"></div>
<div class="a" style="left:997px;top:212px;width:53px;height:20px;background:#f0f0f0;border:1px solid #d9d9d9;"></div>
<div class="a" style="left:884px;top:210px;width:62px;height:22px;background:#fff;border:1px solid #d9d9d9;border-bottom:none;"></div>
<div class="a" style="left:940px;top:247px;width:326px;height:1px;background:#dcdcdc;"></div>
<div class="a" style="left:958px;top:343px;width:308px;height:1px;background:#dcdcdc;"></div>
<div class="a" style="left:928px;top:434px;width:338px;height:1px;background:#dcdcdc;"></div>
<div class="a" style="left:937px;top:511px;width:329px;height:1px;background:#dcdcdc;"></div>
<div class="a" style="left:966px;top:261px;width:89px;height:20px;background:#fff;border:1px solid #969696;"></div>
<div class="a" style="left:1038px;top:263px;width:15px;height:16px;background:#f0f0f0;border:1px solid #b2b2b2;border-top-color:#e6e6e6;"></div>
<div class="a" style="left:1039px;top:270px;width:13px;height:1px;background:#b2b2b2;"></div>
<div class="a" style="left:966px;top:284px;width:89px;height:20px;background:#fff;border:1px solid #969696;"></div>
<div class="a" style="left:1038px;top:286px;width:15px;height:16px;background:#f0f0f0;border:1px solid #b2b2b2;border-top-color:#e6e6e6;"></div>
<div class="a" style="left:1039px;top:293px;width:13px;height:1px;background:#b2b2b2;"></div>
<div class="a" style="left:966px;top:308px;width:89px;height:20px;background:#fff;border:1px solid #969696;"></div>
<div class="a" style="left:1038px;top:310px;width:15px;height:16px;background:#f0f0f0;border:1px solid #b2b2b2;border-top-color:#e6e6e6;"></div>
<div class="a" style="left:1039px;top:317px;width:13px;height:1px;background:#b2b2b2;"></div>
<div class="a" style="left:1177px;top:261px;width:89px;height:20px;background:#fff;border:1px solid #969696;"></div>
<div class="a" style="left:1249px;top:263px;width:15px;height:16px;background:#f0f0f0;border:1px solid #b2b2b2;border-top-color:#e6e6e6;"></div>
<div class="a" style="left:1250px;top:270px;width:13px;height:1px;background:#b2b2b2;"></div>
<div class="a" style="left:1177px;top:284px;width:89px;height:20px;background:#fff;border:1px solid #969696;"></div>
<div class="a" style="left:1249px;top:286px;width:15px;height:16px;background:#f0f0f0;border:1px solid #b2b2b2;border-top-color:#e6e6e6;"></div>
<div class="a" style="left:1250px;top:293px;width:13px;height:1px;background:#b2b2b2;"></div>
<div class="a" style="left:969px;top:264px;width:23px;height:13px;background:#99c9ef;"></div>
<div class="a" style="left:1177px;top:307px;width:89px;height:22px;background:#fff;border:1px solid #969696;"></div>
<div class="a" style="left:1248px;top:308px;width:17px;height:20px;background:#e1e1e1;border:1px solid #adadad;"></div>
<div class="a" style="left:1011px;top:449px;width:125px;height:21px;background:#fff;border:1px solid #969696;"></div>
<div class="a" style="left:1118px;top:450px;width:17px;height:19px;background:#e1e1e1;border:1px solid #adadad;"></div>
<div class="a" style="left:948px;top:647px;width:128px;height:22px;background:#fff;border:1px solid #969696;"></div>
<div class="a" style="left:1058px;top:648px;width:17px;height:20px;background:#e1e1e1;border:1px solid #adadad;"></div>
<div class="a" style="left:902px;top:357px;width:57px;height:47px;background:#fff;border:1px solid #7a7a7a;"></div>
<div class="a" style="left:905px;top:360px;width:51px;height:41px;background:#fff;border:2px solid #1a6bb0;"></div>
<div class="a" style="left:968px;top:357px;width:57px;height:47px;background:#fff;border:1px solid #7a7a7a;"></div>
<div class="a" style="left:938px;top:525px;width:83px;height:106px;background:#d9d9d9;"></div>
<div class="a" style="left:944px;top:527px;width:71px;height:99px;background:#fff;border:1px solid #000;"></div>
<div class="a" style="left:945px;top:528px;width:6px;height:97px;background:conic-gradient(#000 25%,#fff 0 50%,#000 0 75%,#fff 0) 0 0/4px 4px"></div>
<div class="a" style="left:884px;top:688px;width:89px;height:22px;background:#e1e1e1;border:1px solid #adadad;"></div>
<div class="a" style="left:1116px;top:688px;width:74px;height:22px;background:#e1e1e1;border:2px solid #0078d7;"></div>
<div class="a" style="left:1200px;top:688px;width:74px;height:22px;background:#e1e1e1;border:1px solid #adadad;"></div>
<div class="a" style="left:886.4px;top:182.0px;font-size:11px;line-height:12px;color:#000;letter-spacing:0.08px;">Page Setup</div>
<div class="a" style="left:893.7px;top:216.0px;font-size:11px;line-height:12px;color:#000;letter-spacing:0.30px;">Margins</div>
<div class="a" style="left:956.7px;top:217.0px;font-size:11px;line-height:12px;color:#000;letter-spacing:-0.28px;">Paper</div>
<div class="a" style="left:1007.3px;top:217.0px;font-size:11px;line-height:12px;color:#000;letter-spacing:0.14px;">Layout</div>
<div class="a" style="left:893.7px;top:242.0px;font-size:11px;line-height:12px;color:#000;letter-spacing:0.30px;">Margins</div>
<div class="a" style="left:902.0px;top:265.0px;font-size:11px;line-height:12px;color:#000;letter-spacing:0.58px;"><u>T</u>op:</div>
<div class="a" style="left:902.0px;top:288.2px;font-size:11px;line-height:12px;color:#000;letter-spacing:0.08px;"><u>L</u>eft:</div>
<div class="a" style="left:902.0px;top:312.0px;font-size:11px;line-height:12px;color:#000;letter-spacing:0.35px;"><u>G</u>utter:</div>
<div class="a" style="left:1075.3px;top:265.0px;font-size:11px;line-height:12px;color:#000;letter-spacing:0.22px;"><u>B</u>ottom:</div>
<div class="a" style="left:1075.3px;top:288.2px;font-size:11px;line-height:12px;color:#000;letter-spacing:0.36px;"><u>R</u>ight:</div>
<div class="a" style="left:1075.3px;top:312.0px;font-size:11px;line-height:12px;color:#000;letter-spacing:0.44px;">G<u>u</u>tter position:</div>
<div class="a" style="left:969.4px;top:265.0px;font-size:11px;line-height:12px;color:#000;transform:scaleX(0.940);transform-origin:0 0;">2 cm</div>
<div class="a" style="left:969.4px;top:288.2px;font-size:11px;line-height:12px;color:#000;transform:scaleX(0.940);transform-origin:0 0;">2 cm</div>
<div class="a" style="left:969.4px;top:312.0px;font-size:11px;line-height:12px;color:#000;transform:scaleX(0.940);transform-origin:0 0;">2 cm</div>
<div class="a" style="left:1180.3px;top:265.0px;font-size:11px;line-height:12px;color:#000;transform:scaleX(0.940);transform-origin:0 0;">2 cm</div>
<div class="a" style="left:1180.3px;top:288.2px;font-size:11px;line-height:12px;color:#000;transform:scaleX(0.940);transform-origin:0 0;">2 cm</div>
<div class="a" style="left:1181.6px;top:312.0px;font-size:11px;line-height:12px;color:#000;letter-spacing:-0.14px;">Left</div>
<div class="a" style="left:893.7px;top:338.2px;font-size:11px;line-height:12px;color:#000;letter-spacing:0.52px;">Orientation</div>
<div class="a" style="left:911.4px;top:408.0px;font-size:11px;line-height:12px;color:#000;letter-spacing:0.34px;"><u>P</u>ortrait</div>
<div class="a" style="left:969.3px;top:408.0px;font-size:11px;line-height:12px;color:#000;letter-spacing:-0.05px;">Land<u>s</u>cape</div>
<div class="a" style="left:893.7px;top:428.5px;font-size:11px;line-height:12px;color:#000;transform:scaleX(0.930);transform-origin:0 0;">Pages</div>
<div class="a" style="left:902.2px;top:452.7px;font-size:11px;line-height:12px;color:#000;letter-spacing:0.37px;"><u>M</u>ultiple pages:</div>
<div class="a" style="left:1015.8px;top:452.7px;font-size:11px;line-height:12px;color:#000;letter-spacing:0.15px;">Normal</div>
<div class="a" style="left:893.5px;top:506.0px;font-size:11px;line-height:12px;color:#000;letter-spacing:-0.15px;">Preview</div>
<div class="a" style="left:893.4px;top:652.3px;font-size:11px;line-height:12px;color:#000;letter-spacing:0.30px;">Appl<u>y</u> to:</div>
<div class="a" style="left:952.6px;top:651.8px;font-size:11px;line-height:12px;color:#000;letter-spacing:0.46px;">Whole document</div>
<div class="a" style="left:892.6px;top:692.7px;font-size:11px;line-height:12px;color:#000;letter-spacing:0.15px;">Set As <u>D</u>efault</div>
<div class="a" style="left:1145.6px;top:692.7px;font-size:11px;line-height:12px;color:#000;transform:scaleX(0.919);transform-origin:0 0;">OK</div>
<div class="a" style="left:1220.6px;top:692.7px;font-size:11px;line-height:12px;color:#000;letter-spacing:-0.12px;">Cancel</div>
<div class="a" style="left:1210.2px;top:179.0px;font-size:14px;line-height:16px;color:#000;transform:scaleX(0.746);transform-origin:0 0;">?</div>
<svg width="1366" height="768" viewBox="0 0 1366 768"><path d="M1253,182 L1263,192 M1263,182 L1253,192" stroke="#000" fill="none" stroke-width="1" />
<path d="M1042.5,268.0 L1045.5,265.0 L1048.5,268.0 Z" fill="#000"/>
<path d="M1042.5,273.0 L1045.5,276.0 L1048.5,273.0 Z" fill="#000"/>
<path d="M1042.5,291.0 L1045.5,288.0 L1048.5,291.0 Z" fill="#000"/>
<path d="M1042.5,296.0 L1045.5,299.0 L1048.5,296.0 Z" fill="#000"/>
<path d="M1042.5,315.0 L1045.5,312.0 L1048.5,315.0 Z" fill="#000"/>
<path d="M1042.5,320.0 L1045.5,323.0 L1048.5,320.0 Z" fill="#000"/>
<path d="M1253.5,268.0 L1256.5,265.0 L1259.5,268.0 Z" fill="#000"/>
<path d="M1253.5,273.0 L1256.5,276.0 L1259.5,273.0 Z" fill="#000"/>
<path d="M1253.5,291.0 L1256.5,288.0 L1259.5,291.0 Z" fill="#000"/>
<path d="M1253.5,296.0 L1256.5,299.0 L1259.5,296.0 Z" fill="#000"/>
<path d="M1253,316 L1257,320 L1261,316" stroke="#444" fill="none" stroke-width="1" />
<path d="M1123,458 L1127,462 L1131,458" stroke="#444" fill="none" stroke-width="1" />
<path d="M1063,656 L1067,660 L1071,656" stroke="#444" fill="none" stroke-width="1" />
<path d="M919.5,367.5 H932.5 L939.5,374.5 V394.5 H919.5 Z" stroke="#333" fill="#f6f6f6" stroke-width="1" />
<path d="M932.5,367.5 V374.5 H939.5" stroke="#333" fill="none" stroke-width="1" />
<path d="M982.5,371.5 H1009.5 V383 L1002,390.5 H982.5 Z" stroke="#333" fill="#f6f6f6" stroke-width="1" />
<path d="M1009.5,383 H1002 V390.5" stroke="#333" fill="none" stroke-width="1" />
<path d="M962,534.5 H1008 M958,538.5 H1008 M958,542.5 H1008 M958,546.5 H974 M962,554.5 H1008 M958,558.5 H1008 M958,562.5 H1008 M958,566.5 H974 M962,574.5 H1008 M958,578.5 H1008 M958,582.5 H1008 M958,586.5 H974 M962,594.5 H1008 M958,598.5 H1008 M958,602.5 H1008 M958,606.5 H974 M962,614.5 H1008 M958,618.5 H1008" stroke="#000" fill="none" stroke-width="1" /></svg>
</div>
</body></html>
